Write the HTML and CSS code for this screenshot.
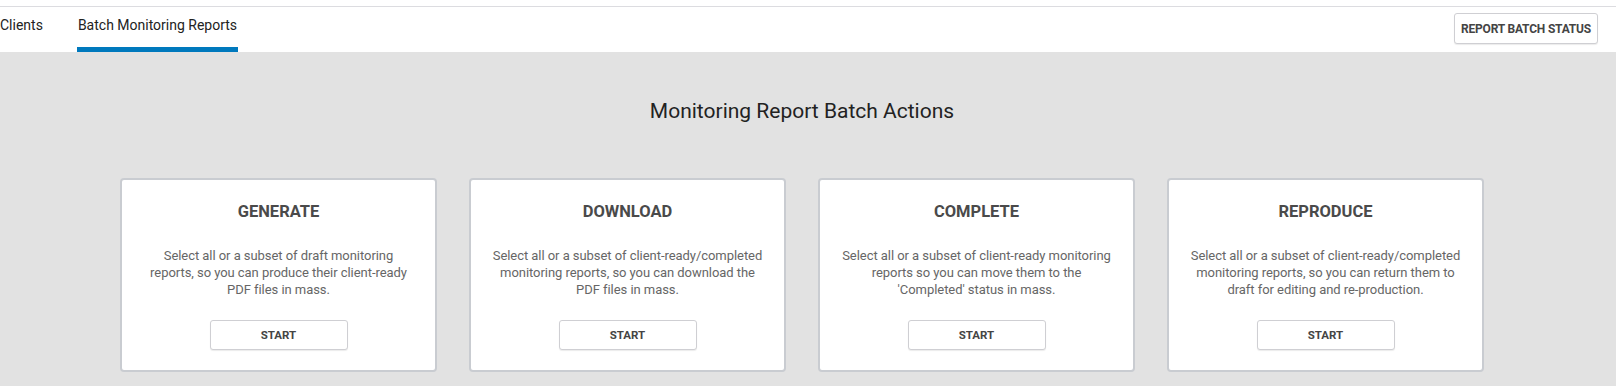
FILE: index.html
```html
<!DOCTYPE html>
<html lang="en">
<head>
	<meta charset="UTF-8">
	<title>Monitoring Report Batch Actions</title>
	<link rel="stylesheet" href="styles.css">
</head>
<body>
<div class="topline"></div>
<div class="tabbar">
	<div class="tabs">
		<a class="tab">Clients</a>
		<a class="tab active">Batch Monitoring Reports</a>
	</div>
	<button class="btn status-btn">REPORT BATCH STATUS</button>
</div>
<div class="main">
	<h1 class="title">Monitoring Report Batch Actions</h1>
	<div class="cards">
		<div class="card">
			<h2>GENERATE</h2>
			<p>Select all or a subset of draft monitoring reports, so you can produce their client-ready PDF files in mass.</p>
			<button class="btn start-btn">START</button>
		</div>
		<div class="card">
			<h2>DOWNLOAD</h2>
			<p>Select all or a subset of client-ready/completed monitoring reports, so you can download the PDF files in mass.</p>
			<button class="btn start-btn">START</button>
		</div>
		<div class="card">
			<h2>COMPLETE</h2>
			<p>Select all or a subset of client-ready monitoring reports so you can move them to the 'Completed' status in mass.</p>
			<button class="btn start-btn">START</button>
		</div>
		<div class="card">
			<h2>REPRODUCE</h2>
			<p>Select all or a subset of client-ready/completed monitoring reports, so you can return them to draft for editing and re-production.</p>
			<button class="btn start-btn">START</button>
		</div>
	</div>
</div>
</body>
</html>
```
FILE: styles.css
```css
html, body {
	margin: 0;
	padding: 0;
	height: 100%;
}
body {
	font-family: Roboto, "Liberation Sans", sans-serif;
	background: #e2e2e2;
	color: #222;
	overflow: hidden;
}
.topline {
	height: 6px;
	background: #fff;
	border-bottom: 1px solid #dcdce0;
}
.tabbar {
	height: 45px;
	background: #fff;
	display: flex;
	justify-content: space-between;
	align-items: flex-start;
	padding-right: 18px;
}
.tabs {
	display: flex;
	height: 100%;
}
.tab {
	display: block;
	font-size: 14px;
	color: #222;
	padding: 10px 0 0;
	height: 35px;
	box-sizing: border-box;
	margin-left: 0;
	margin-right: 34px;
	cursor: pointer;
}
.tab.active {
	height: 45px;
	border-bottom: 5px solid #0079bd;
	padding-left: 1px;
	padding-right: 1px;
}
.btn {
	font-family: Roboto, "Liberation Sans", sans-serif;
	font-weight: 700;
	background: #fff;
	color: #444;
	border: 1px solid #cfcfd3;
	border-radius: 3px;
	box-shadow: 0 1px 1px rgba(0,0,0,0.08);
	cursor: pointer;
}
.status-btn {
	margin-top: 6px;
	height: 31px;
	width: 144px;
	font-size: 12px;
	letter-spacing: -0.2px;
	padding: 0;
}
.main {
	padding: 0 12px 0 0;
}
.title {
	margin: 0;
	padding-top: 47px;
	height: 84px;
	box-sizing: border-box;
	text-align: center;
	font-size: 21px;
	font-weight: 400;
	color: #222;
}
.cards {
	display: flex;
	justify-content: center;
	gap: 32px;
	padding-top: 42px;
}
.card {
	width: 317px;
	height: 194px;
	box-sizing: border-box;
	background: #fff;
	border: 2px solid #c9ccd1;
	border-radius: 4px;
	text-align: center;
	padding: 0 20px;
}
.card h2 {
	margin: 22px 0 0;
	font-size: 16.5px;
	font-weight: 700;
	color: #4a4a4a;
	line-height: 20px;
}
.card p {
	width: 272px;
	margin: 25px auto 0;
	font-size: 13px;
	line-height: 17px;
	letter-spacing: -0.05px;
	color: #666;
	height: 51px;
}
.start-btn {
	margin-top: 22px;
	width: 138px;
	height: 30px;
	font-size: 11.5px;
	padding: 0;
}
```
